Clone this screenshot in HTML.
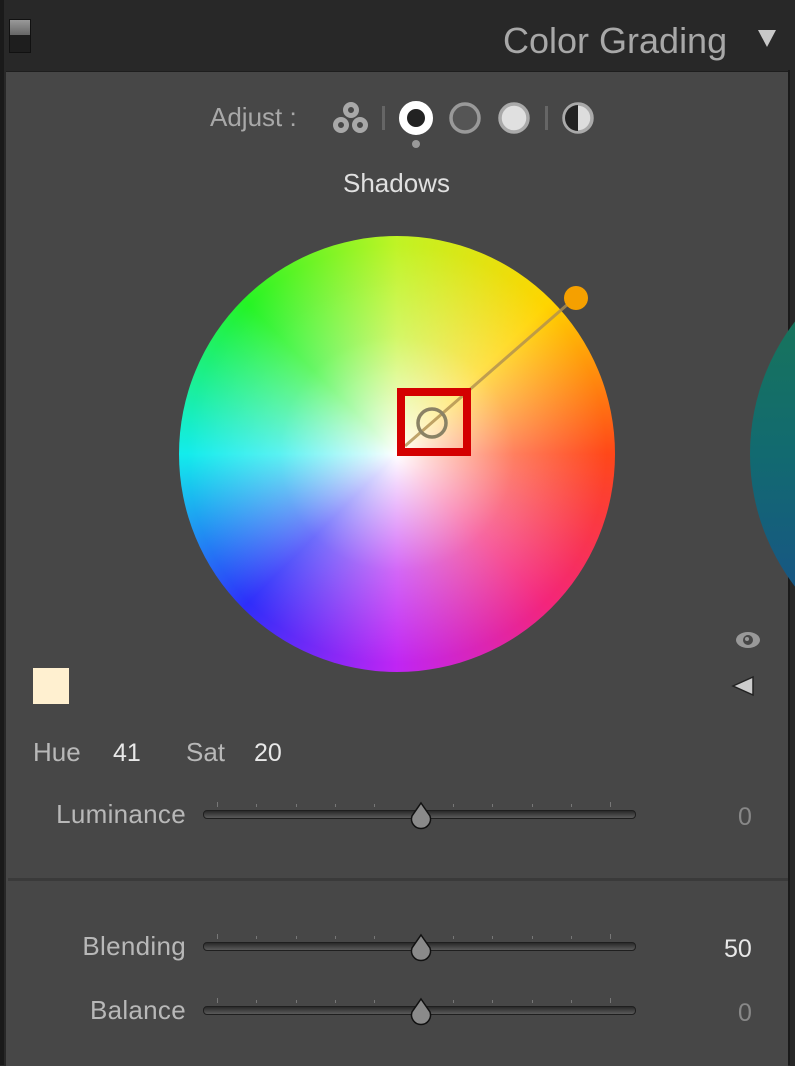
<!DOCTYPE html>
<html><head><style>
body{margin:0;width:795px;height:1065px;background:#282828;position:relative;overflow:hidden;font-family:"Liberation Sans",sans-serif}
.abs{position:absolute}
.panel{left:6px;top:71px;width:782px;height:994px;background:#474747;border-top:1px solid #1e1e1e;overflow:hidden}
.t{position:absolute;color:#b8b8b8;font-size:25px;white-space:nowrap}
.r{right:609px;text-align:right;font-size:26px;letter-spacing:0.3px}
.track{position:absolute;left:203px;width:431px;height:7px;border-radius:4px;background:linear-gradient(#2a2a2a,#5a5a5a);border:1px solid #1f1f1f}
</style></head><body>
<div class="abs" style="left:9px;top:19px;width:20px;height:32px;background:#1e1e1e;border:1px solid #111"><div style="width:20px;height:15px;background:linear-gradient(#999,#666)"></div></div>
<div class="t" style="left:503px;top:20px;font-size:36px;color:#a8a8a8">Color Grading</div>
<svg class="abs" style="left:757px;top:28px" width="20" height="20"><polygon points="1,2 19,2 10,19" fill="#c8c8c8"/></svg>
<div class="abs panel"></div>
<div class="abs" style="left:0;top:0;width:4px;height:1065px;background:#1a1a1a"></div>
<div class="abs" style="left:788px;top:70px;width:2px;height:995px;background:#1a1a1a"></div>
<div class="t" style="left:210px;top:102px;font-size:26px;color:#a8a8a8">Adjust :</div>
<svg class="abs" style="left:330px;top:98px" width="270" height="56">
<g fill="none" stroke="#a8a8a8" stroke-width="5"><circle cx="21" cy="12" r="5.5"/><circle cx="11" cy="27" r="5.5"/><circle cx="30" cy="27" r="5.5"/></g>
<rect x="52" y="8" width="3" height="24" fill="#666"/>
<circle cx="86" cy="20" r="13" fill="#222" stroke="#fff" stroke-width="8"/>
<circle cx="86" cy="46" r="4" fill="#999"/>
<circle cx="135" cy="20" r="14" fill="#555" stroke="#999" stroke-width="3.5"/>
<circle cx="184" cy="20" r="14" fill="#e0e0e0" stroke="#aaa" stroke-width="3.5"/>
<rect x="215" y="8" width="3" height="24" fill="#666"/>
<circle cx="248" cy="20" r="14" fill="#ddd" stroke="#aaa" stroke-width="3.5"/>
<path d="M248 7 A13 13 0 0 0 248 33 Z" fill="#222"/>
</svg>
<div class="t" style="left:343px;top:168px;font-size:26px;color:#e0e0e0">Shadows</div>
<div class="abs" style="left:179px;top:236px;width:436px;height:436px;border-radius:50%;background:conic-gradient(hsl(75,90%,55%),hsl(50,100%,50%) 45deg,hsl(12,100%,55%) 90deg,hsl(335,90%,55%) 135deg,hsl(285,90%,55%) 180deg,hsl(240,95%,58%) 225deg,hsl(180,85%,50%) 270deg,hsl(120,90%,55%) 315deg,hsl(75,90%,55%))"></div>
<div class="abs" style="left:179px;top:236px;width:436px;height:436px;border-radius:50%;background:radial-gradient(circle,#fff 0%,rgba(255,255,255,.8) 10%,rgba(255,255,255,.3) 38%,rgba(255,255,255,0) 68%)"></div>
<div class="abs" style="left:750px;top:236px;width:436px;height:436px;border-radius:50%;background:linear-gradient(#1a7a50,#126a70 50%,#1a4a90)"></div>
<svg class="abs" style="left:0;top:0" width="795" height="720">
<line x1="405" y1="446" x2="568" y2="304" stroke="#b09050" stroke-width="3" opacity=".8"/>
<circle cx="576" cy="298" r="12" fill="#f5a000"/>
<circle cx="432" cy="423" r="14" fill="none" stroke="#8a8265" stroke-width="3.5"/>
<rect x="401" y="392" width="66" height="60" fill="none" stroke="#d40000" stroke-width="8"/>
<ellipse cx="748" cy="640" rx="12" ry="8" fill="#999"/><circle cx="748" cy="640" r="5" fill="#474747"/><circle cx="747" cy="639" r="2" fill="#999"/>
<polygon points="733,686 753,677 753,695" fill="#ccc" stroke="#222" stroke-width="1.5"/>
</svg>
<div class="abs" style="left:33px;top:668px;width:36px;height:36px;background:#fff0d0"></div>
<div class="t" style="left:33px;top:737px;font-size:26px">Hue</div>
<div class="t" style="left:113px;top:739px;color:#e8e8e8">41</div>
<div class="t" style="left:186px;top:737px;font-size:26px">Sat</div>
<div class="t" style="left:254px;top:739px;color:#e8e8e8">20</div>

<div class="t r" style="top:799px">Luminance</div>
<div class="track" style="top:810px"></div>
<div class="t" style="left:738px;top:803px;color:#888">0</div>
<div class="abs" style="left:8px;top:878px;width:780px;height:3px;background:#3a3a3a"></div>
<div class="t r" style="top:931px">Blending</div>
<div class="track" style="top:942px"></div>
<div class="t" style="left:724px;top:935px;color:#e8e8e8">50</div>
<div class="t r" style="top:995px">Balance</div>
<div class="track" style="top:1006px"></div>
<div class="t" style="left:738px;top:999px;color:#888">0</div>
<svg class="abs" style="left:0;top:790px" width="795" height="240">
<g fill="#777">
<g id="tk"><rect x="217" y="12" width="1" height="5"/><rect x="256" y="14" width="1" height="3"/><rect x="296" y="14" width="1" height="3"/><rect x="335" y="14" width="1" height="3"/><rect x="374" y="14" width="1" height="3"/><rect x="453" y="14" width="1" height="3"/><rect x="492" y="14" width="1" height="3"/><rect x="532" y="14" width="1" height="3"/><rect x="571" y="14" width="1" height="3"/><rect x="610" y="12" width="1" height="5"/></g>
<use href="#tk" y="132"/><use href="#tk" y="196"/></g>
<g id="th"><path d="M421 13 L430 26 A9.5 9.5 0 1 1 412 26 Z" fill="#8a8a8a" stroke="#111" stroke-width="1.5"/></g>
<use href="#th" y="132"/><use href="#th" y="196"/>
</svg>
</body></html>
